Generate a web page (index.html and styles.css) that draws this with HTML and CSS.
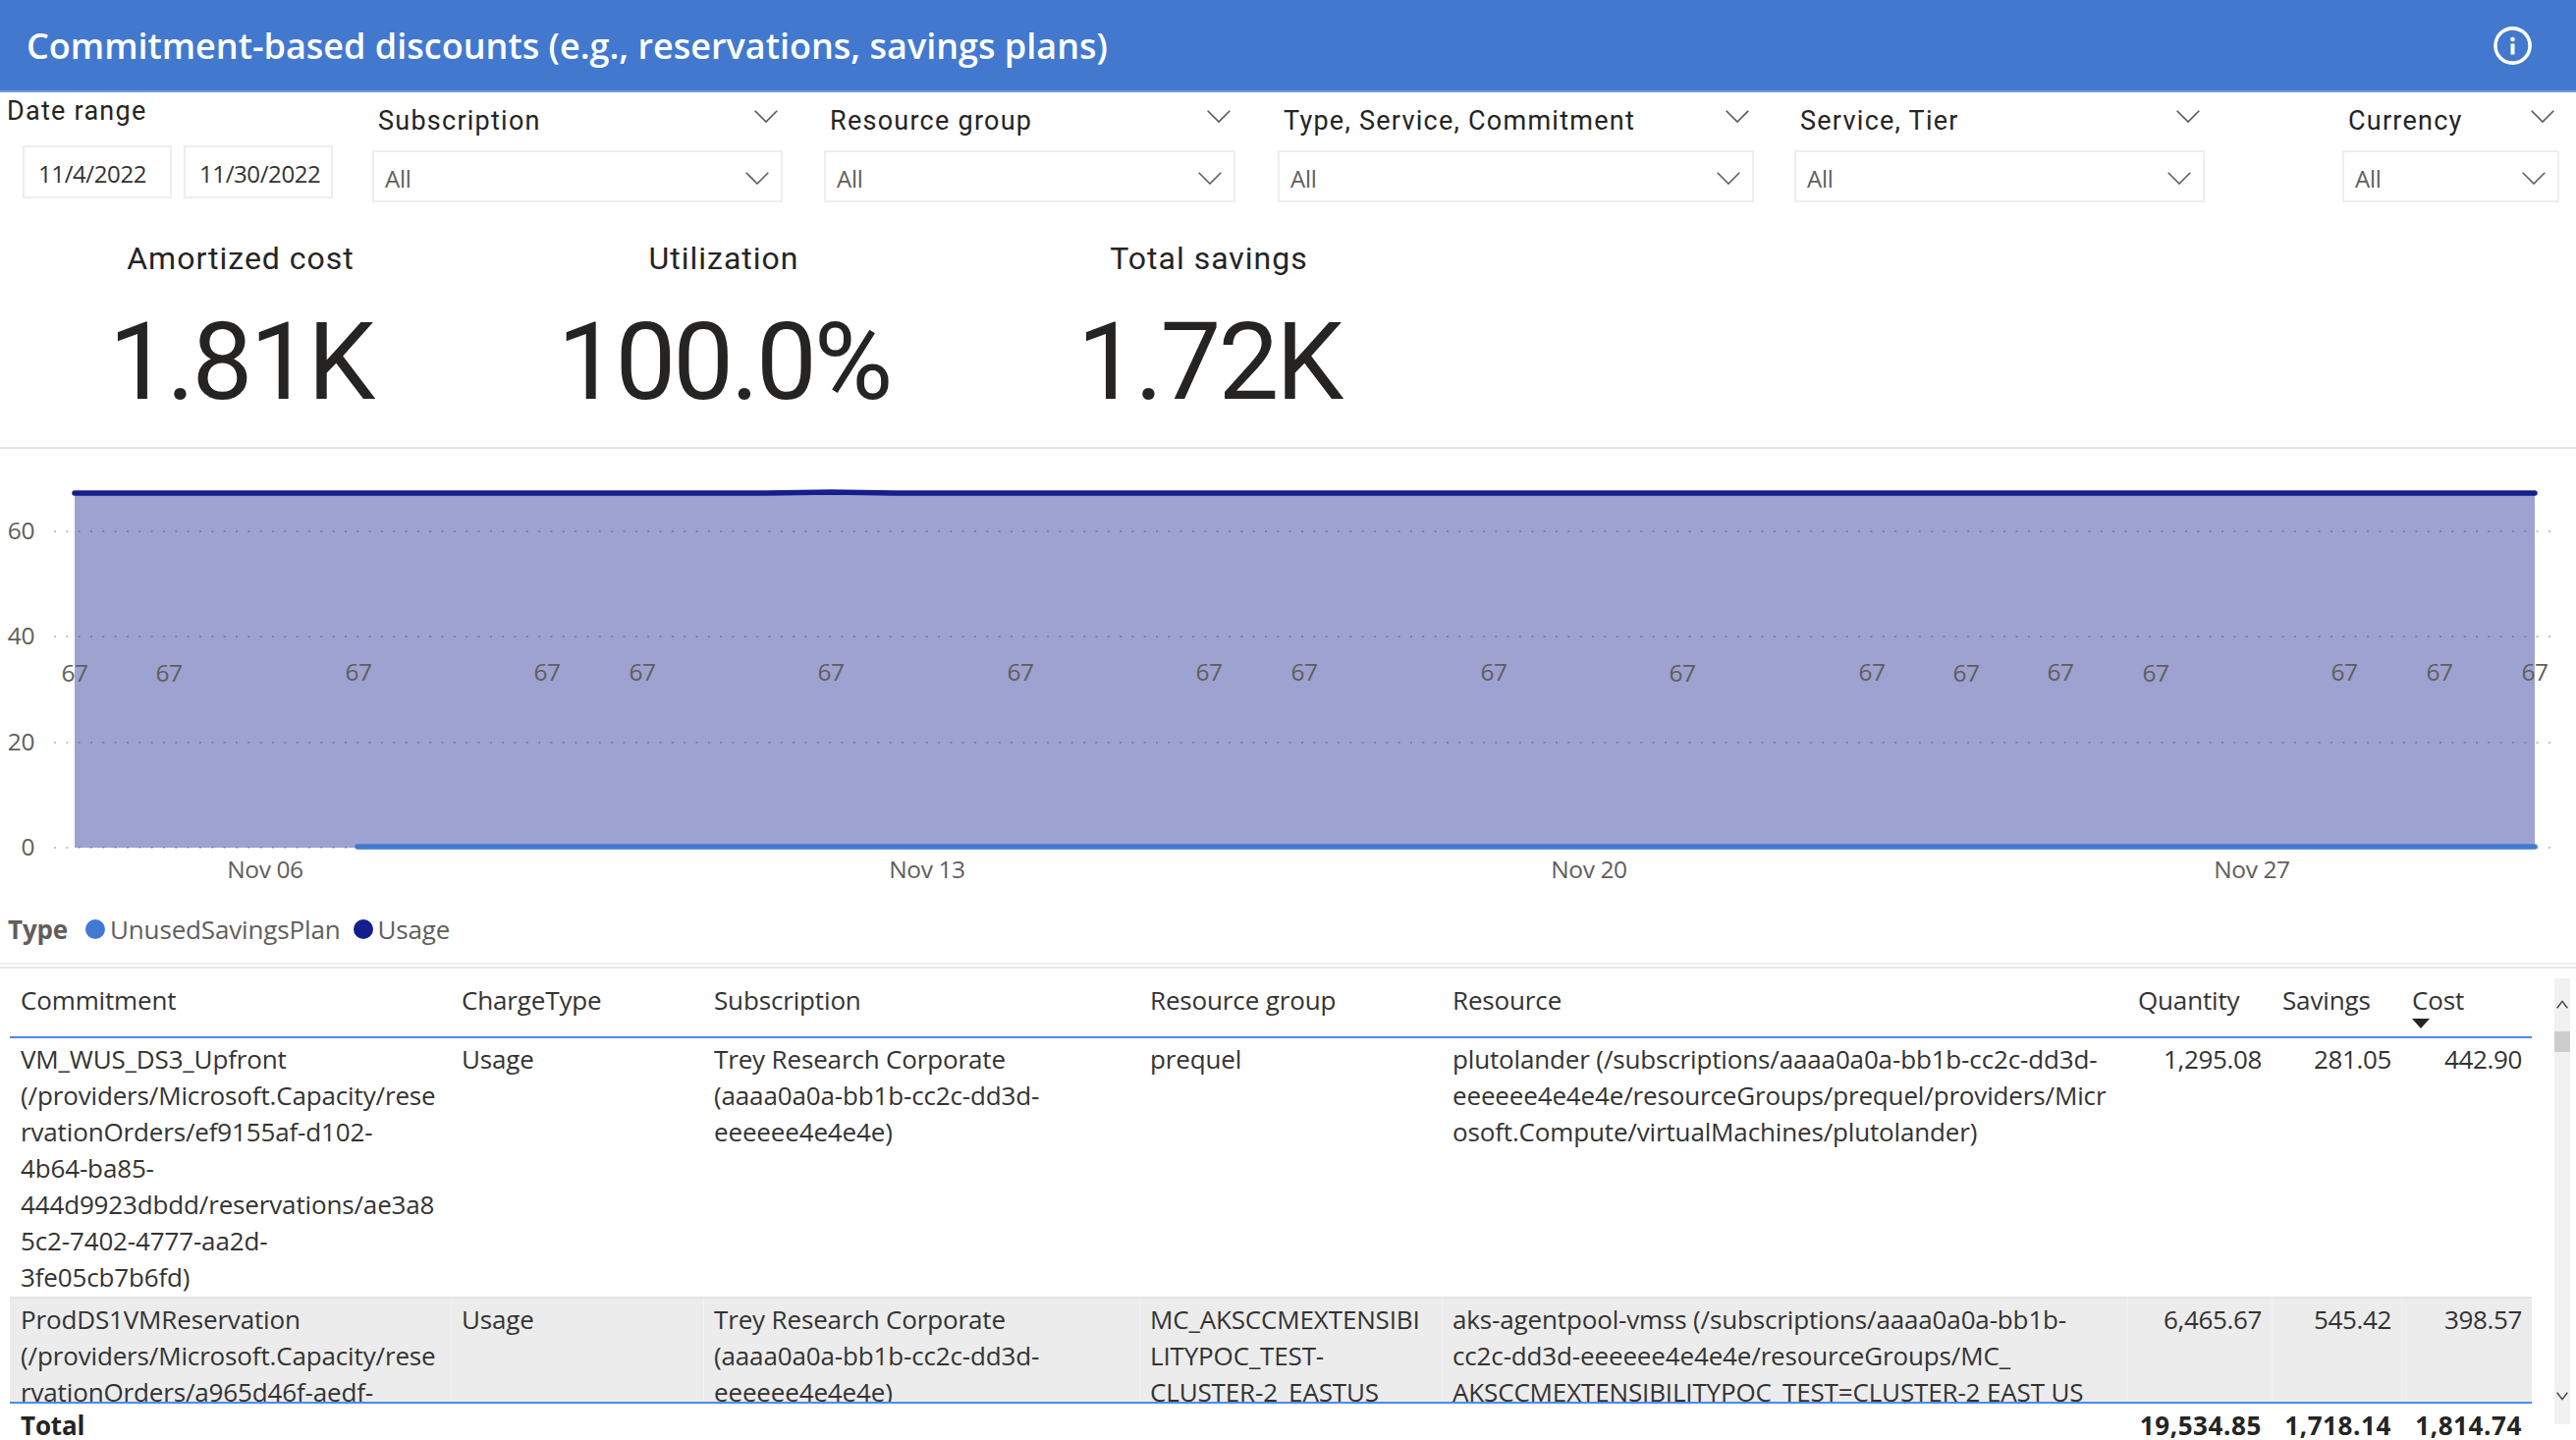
FILE: index.html
```html
<!DOCTYPE html>
<html lang="en">
  <head>
    <meta charset="UTF-8" />
    <title>Commitment-based discounts</title>
    <link rel="stylesheet" href="styles.css">
  </head>
  <body>
    <svg class="sprites" width="0" height="0">
      <symbol id="chevron" viewBox="0 0 24 13">
        <polyline points="0.7,0.7 12,12 23.3,0.7" fill="none" stroke="currentColor" stroke-width="1.6" />
      </symbol>
      <symbol id="small-chevron" viewBox="0 0 12 9">
        <polyline points="0.7,0.7 6,7.6 11.3,0.7" fill="none" stroke="currentColor" stroke-width="1.5" />
      </symbol>
    </svg>

    <header class="title-bar">
      <h1>Commitment-based discounts (e.g., reservations, savings plans)</h1>
      <svg class="info-icon" width="39" height="39" viewBox="0 0 39 39">
        <circle cx="19.5" cy="19.5" r="17.6" fill="none" stroke="#fff" stroke-width="3.6" />
        <circle cx="19.5" cy="13" r="2.3" fill="#fff" />
        <rect x="17.5" y="17.5" width="4" height="11" fill="#fff" />
      </svg>
    </header>

    <section class="filters">
      <div class="date-range">
        <div class="date-label">Date range</div>
        <div class="date-boxes">
          <div class="date-box">11/4/2022</div>
          <div class="date-box">11/30/2022</div>
        </div>
      </div>
      <div class="slicer slicer-sub">
        <div class="slicer-head"><span>Subscription</span><svg class="chev"><use href="#chevron" /></svg></div>
        <div class="slicer-box"><span>All</span><svg class="chev"><use href="#chevron" /></svg></div>
      </div>
      <div class="slicer slicer-res">
        <div class="slicer-head"><span>Resource group</span><svg class="chev"><use href="#chevron" /></svg></div>
        <div class="slicer-box"><span>All</span><svg class="chev"><use href="#chevron" /></svg></div>
      </div>
      <div class="slicer slicer-type">
        <div class="slicer-head"><span>Type, Service, Commitment</span><svg class="chev"><use href="#chevron" /></svg></div>
        <div class="slicer-box"><span>All</span><svg class="chev"><use href="#chevron" /></svg></div>
      </div>
      <div class="slicer slicer-tier">
        <div class="slicer-head"><span>Service, Tier</span><svg class="chev"><use href="#chevron" /></svg></div>
        <div class="slicer-box"><span>All</span><svg class="chev"><use href="#chevron" /></svg></div>
      </div>
      <div class="slicer slicer-cur">
        <div class="slicer-head"><span>Currency</span><svg class="chev"><use href="#chevron" /></svg></div>
        <div class="slicer-box"><span>All</span><svg class="chev"><use href="#chevron" /></svg></div>
      </div>
    </section>

    <section class="kpis">
      <div class="kpi">
        <div class="kpi-label">Amortized cost</div>
        <div class="kpi-value">1.81K</div>
      </div>
      <div class="kpi">
        <div class="kpi-label">Utilization</div>
        <div class="kpi-value">100.0%</div>
      </div>
      <div class="kpi">
        <div class="kpi-label">Total savings</div>
        <div class="kpi-value">1.72K</div>
      </div>
    </section>

    <section class="chart-section">
      <svg class="chart" width="2623" height="466" viewBox="0 457 2623 466">
        <line class="grid" x1="55" y1="541" x2="2598" y2="541" />
        <line class="grid" x1="55" y1="648" x2="2598" y2="648" />
        <line class="grid" x1="55" y1="756" x2="2598" y2="756" />
        <line class="grid" x1="55" y1="863" x2="2598" y2="863" />
        <rect class="area" x="76" y="502" width="2505" height="361" />
        <line class="line-unused" x1="364" y1="862" x2="2581" y2="862" />
        <polyline class="line-usage" points="76,502 780,502 846,501 912,502 2581,502" />

        <text class="axis" x="35" y="542" text-anchor="end">60</text>
        <text class="axis" x="35" y="649" text-anchor="end">40</text>
        <text class="axis" x="35" y="757" text-anchor="end">20</text>
        <text class="axis" x="35" y="864" text-anchor="end">0</text>

        <text class="axis" x="270" y="887" text-anchor="middle">Nov 06</text>
        <text class="axis" x="944" y="887" text-anchor="middle">Nov 13</text>
        <text class="axis" x="1618" y="887" text-anchor="middle">Nov 20</text>
        <text class="axis" x="2293" y="887" text-anchor="middle">Nov 27</text>

        <text class="data-label" x="76" y="687">67</text>
        <text class="data-label" x="172" y="687">67</text>
        <text class="data-label" x="365" y="686">67</text>
        <text class="data-label" x="557" y="686">67</text>
        <text class="data-label" x="654" y="686">67</text>
        <text class="data-label" x="846" y="686">67</text>
        <text class="data-label" x="1039" y="686">67</text>
        <text class="data-label" x="1231" y="686">67</text>
        <text class="data-label" x="1328" y="686">67</text>
        <text class="data-label" x="1521" y="686">67</text>
        <text class="data-label" x="1713" y="687">67</text>
        <text class="data-label" x="1906" y="686">67</text>
        <text class="data-label" x="2002" y="687">67</text>
        <text class="data-label" x="2098" y="686">67</text>
        <text class="data-label" x="2195" y="687">67</text>
        <text class="data-label" x="2387" y="686">67</text>
        <text class="data-label" x="2484" y="686">67</text>
        <text class="data-label" x="2581" y="686">67</text>
      </svg>
      <div class="legend">
        <span class="legend-title">Type</span>
        <span class="legend-item"><i class="dot dot-unused"></i>UnusedSavingsPlan</span>
        <span class="legend-item"><i class="dot dot-usage"></i>Usage</span>
      </div>
    </section>

    <section class="table-section">
      <div class="table">
        <div class="row head">
          <div class="cell">Commitment</div>
          <div class="cell">ChargeType</div>
          <div class="cell">Subscription</div>
          <div class="cell">Resource group</div>
          <div class="cell">Resource</div>
          <div class="cell">Quantity</div>
          <div class="cell">Savings</div>
          <div class="cell">Cost<span class="sort-arrow"></span></div>
        </div>
        <div class="rows">
          <div class="row first">
            <div class="cell">VM_WUS_DS3_Upfront<br>(/providers/Microsoft.Capacity/rese<br>rvationOrders/ef9155af-d102-<br>4b64-ba85-<br>444d9923dbdd/reservations/ae3a8<br>5c2-7402-4777-aa2d-<br>3fe05cb7b6fd)</div>
            <div class="cell">Usage</div>
            <div class="cell">Trey Research Corporate<br>(aaaa0a0a-bb1b-cc2c-dd3d-<br>eeeeee4e4e4e)</div>
            <div class="cell">prequel</div>
            <div class="cell">plutolander (/subscriptions/aaaa0a0a-bb1b-cc2c-dd3d-<br>eeeeee4e4e4e/resourceGroups/prequel/providers/Micr<br>osoft.Compute/virtualMachines/plutolander)</div>
            <div class="cell num">1,295.08</div>
            <div class="cell num">281.05</div>
            <div class="cell num">442.90</div>
          </div>
          <div class="row alt">
            <div class="cell">ProdDS1VMReservation<br>(/providers/Microsoft.Capacity/rese<br>rvationOrders/a965d46f-aedf-</div>
            <div class="cell">Usage</div>
            <div class="cell">Trey Research Corporate<br>(aaaa0a0a-bb1b-cc2c-dd3d-<br>eeeeee4e4e4e)</div>
            <div class="cell">MC_AKSCCMEXTENSIBI<br>LITYPOC_TEST-<br>CLUSTER-2_EASTUS</div>
            <div class="cell">aks-agentpool-vmss (/subscriptions/aaaa0a0a-bb1b-<br>cc2c-dd3d-eeeeee4e4e4e/resourceGroups/MC_<br>AKSCCMEXTENSIBILITYPOC_TEST=CLUSTER-2 EAST US</div>
            <div class="cell num">6,465.67</div>
            <div class="cell num">545.42</div>
            <div class="cell num">398.57</div>
          </div>
        </div>
        <div class="row total">
          <div class="cell">Total</div>
          <div class="cell"></div>
          <div class="cell"></div>
          <div class="cell"></div>
          <div class="cell"></div>
          <div class="cell num">19,534.85</div>
          <div class="cell num">1,718.14</div>
          <div class="cell num">1,814.74</div>
        </div>
      </div>
      <div class="scrollbar">
        <svg class="scroll-arrow up"><use href="#small-chevron" /></svg>
        <div class="thumb"></div>
        <svg class="scroll-arrow down"><use href="#small-chevron" /></svg>
      </div>
    </section>
  </body>
</html>
```

FILE: styles.css
```css
* {
  box-sizing: border-box;
}

html,
body {
  margin: 0;
  height: 1466px;
  overflow: hidden;
  background: #fff;
}

body {
  font-family: "Open Sans", "Noto Sans", sans-serif;
  color: #252423;
}

.sprites {
  position: absolute;
}

/* title */
.title-bar {
  height: 94px;
  background: #4279cf;
  border-bottom: 2px solid #6f9bdd;
  display: flex;
  align-items: center;
  justify-content: space-between;
  padding: 0 45px 0 27px;
}

.title-bar h1 {
  margin: 0;
  color: #fff;
  font-size: 36px;
  font-weight: 600;
  white-space: nowrap;
}

/* filters */
.filters {
  height: 112px;
  display: flex;
}

.date-range {
  width: 379px;
  padding: 4px 0 0 7px;
}

.date-label,
.slicer-head span,
.kpi-label {
  font-family: Roboto, "Liberation Sans", sans-serif;
}

.date-label {
  height: 30px;
  line-height: 30px;
  font-size: 27px;
  letter-spacing: 1.25px;
}

.date-boxes {
  display: flex;
  gap: 12px;
  margin: 20px 0 0 16px;
}

.date-box {
  width: 152px;
  height: 54px;
  border: 2px solid #eee;
  padding-left: 14px;
  line-height: 54px;
  font-size: 24px;
  letter-spacing: -0.4px;
  color: #333;
}

.slicer {
  padding-top: 14px;
}

.slicer-sub {
  width: 418px;
}

.slicer-res {
  width: 419px;
  margin-left: 42px;
}

.slicer-type {
  width: 485px;
  margin-left: 43px;
}

.slicer-tier {
  width: 418px;
  margin-left: 41px;
}

.slicer-cur {
  width: 221px;
  margin-left: 140px;
}

.slicer-head {
  height: 30px;
  display: flex;
  align-items: center;
  justify-content: space-between;
  padding: 0 5px 0 6px;
  font-size: 27px;
  letter-spacing: 1.25px;
  color: #252423;
}

.slicer-head .chev {
  margin-top: -10px;
  color: #555;
}

.slicer-box {
  height: 53px;
  margin-top: 15px;
  border: 2px solid #eee;
  display: flex;
  align-items: center;
  justify-content: space-between;
  padding: 4px 12px 0 11px;
  font-size: 24px;
  letter-spacing: -0.3px;
  color: #605e5c;
}

.chev {
  width: 24px;
  height: 13px;
  color: #605e5c;
}

/* cards */
.kpis {
  height: 251px;
  border-bottom: 2px solid #e6e6e6;
  display: grid;
  grid-template-columns: 490px 494px 494px;
}

.kpi {
  text-align: center;
}

.kpi-label {
  margin-top: 38px;
  height: 38px;
  line-height: 38px;
  font-size: 32px;
  letter-spacing: 1px;
}

.kpi-value {
  margin-top: 32px;
  height: 110px;
  line-height: 110px;
  font-family: Roboto, "Liberation Sans", sans-serif;
  font-size: 110px;
  letter-spacing: -3px;
}

/* chart */
.chart-section {
  height: 525px;
  border-bottom: 2px solid #eee;
}

.chart {
  display: block;
}

.grid {
  stroke: #c4c4c4;
  stroke-width: 2;
  stroke-dasharray: 2 10.33;
}

.area {
  fill: #141e8c;
  fill-opacity: 0.41;
}

.line-usage,
.line-unused {
  fill: none;
  stroke-width: 5.5;
  stroke-linecap: round;
}

.line-usage {
  stroke: #141e8c;
}

.line-unused {
  stroke: #4279d2;
}

.axis,
.data-label {
  font-family: "Open Sans", sans-serif;
  font-size: 24.5px;
  letter-spacing: -0.4px;
  fill: #605e5c;
  dominant-baseline: middle;
}

.data-label {
  text-anchor: middle;
}

.legend {
  height: 46px;
  display: flex;
  align-items: center;
  padding-left: 8px;
  font-size: 26px;
  letter-spacing: -0.15px;
  color: #605e5c;
}

.legend-title {
  font-weight: 700;
  width: 79px;
}

.legend-item {
  display: flex;
  align-items: center;
  margin-right: 13px;
}

.dot {
  width: 20px;
  height: 20px;
  border-radius: 50%;
  margin-right: 5px;
}

.dot-unused {
  background: #4279d2;
}

.dot-usage {
  background: #141e8c;
}

/* table */
.table-section {
  display: flex;
  height: 480px;
  margin-top: 2px;
  padding-left: 10px;
  border-top: 2px solid #e6e6e6;
}

.table {
  width: 2568px;
  font-size: 26px;
  letter-spacing: -0.15px;
  line-height: 37px;
  color: #333;
}

.row {
  display: grid;
  grid-template-columns: 449px 257px 444px 308px 698px 147px 132px 133px;
  white-space: nowrap;
}

.cell {
  padding: 0 10px 0 11px;
}

.num {
  text-align: right;
  letter-spacing: -0.35px;
}

.head {
  height: 71px;
  padding-top: 14px;
  border-bottom: 2px solid #4d8af0;
}

.sort-arrow {
  display: block;
  width: 0;
  border-left: 9px solid transparent;
  border-right: 9px solid transparent;
  border-top: 10px solid #252423;
}

.rows {
  height: 372px;
  overflow: hidden;
  border-bottom: 2px solid #4d8af0;
}

.first {
  height: 263px;
  padding-top: 3px;
}

.alt {
  height: 140px;
  border-top: 2px solid #e4e4e4;
  background: #ececec;
}

.alt .cell {
  padding-top: 3px;
}

.alt .cell + .cell {
  box-shadow: inset 1px 0 0 #f2f2f2;
}

.total {
  font-weight: 700;
  color: #252423;
  padding-top: 4px;
}

.total .num {
  letter-spacing: 0.6px;
}

/* scrollbar */
.scrollbar {
  width: 16px;
  height: 454px;
  margin: 10px 0 0 23px;
  background: #f1f1f1;
  display: flex;
  flex-direction: column;
  align-items: center;
  padding-top: 22px;
}

.scroll-arrow {
  width: 12px;
  height: 9px;
  color: #444;
}

.scroll-arrow.up {
  transform: scaleY(-1);
}

.thumb {
  width: 100%;
  height: 21px;
  margin-top: 23px;
  background: #cdcdcd;
}

.scroll-arrow.down {
  margin-top: 346px;
}
```
